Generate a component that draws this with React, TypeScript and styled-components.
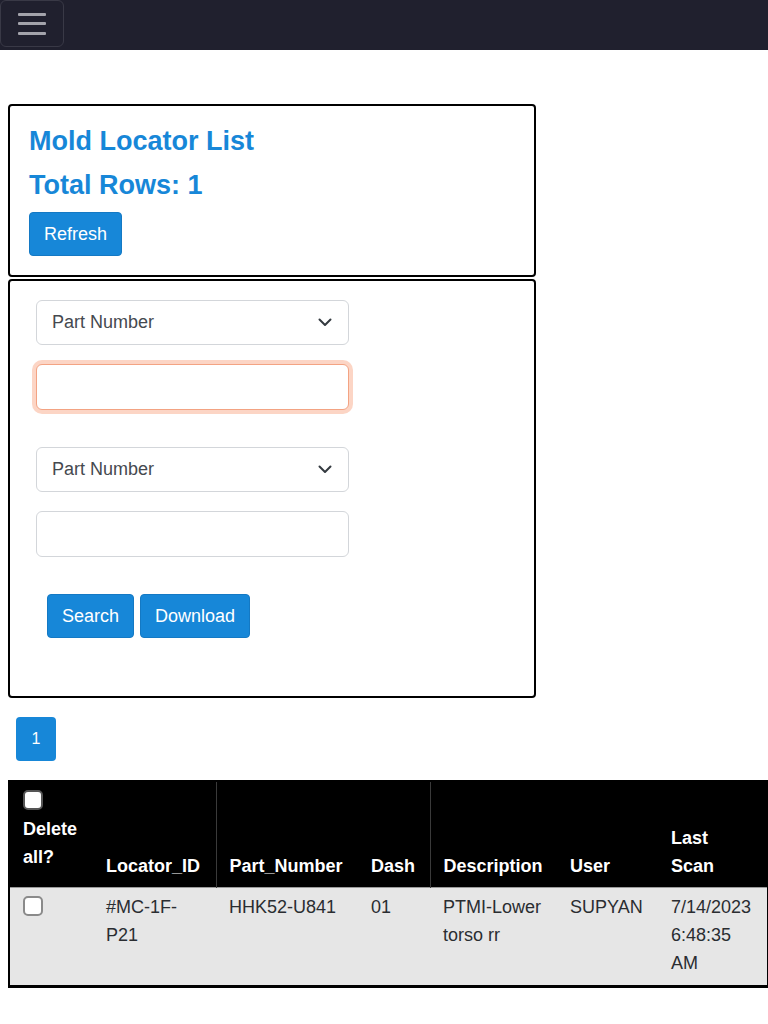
import styled, { createGlobalStyle } from 'styled-components'

const GlobalStyle = createGlobalStyle`
    body {
        margin: 0;
        background: #ffffff;
        font-family: "Liberation Sans", Arial, sans-serif;
        color: #212529;
    }
    * {
        box-sizing: border-box;
    }
`

const BLUE = '#1787d8'

const Navbar = styled.nav`
    height: 50px;
    background: #20202e;
    display: flex;
    align-items: flex-start;
`

const Toggler = styled.button`
    width: 64px;
    height: 47px;
    margin: 0;
    background: transparent;
    border: 1px solid #393946;
    border-radius: 6px;
    display: flex;
    flex-direction: column;
    align-items: center;
    justify-content: center;
    gap: 6.5px;
    padding: 0;
    > span {
        display: block;
        width: 28px;
        height: 3px;
        border-radius: 1px;
        background: #a3a3ab;
    }
`

const Main = styled.main`
    padding: 54px 8px 0;
`

const Card = styled.section<{ pad: string; height: number }>`
    width: 528px;
    height: ${({ height }) => height}px;
    border: 2px solid #000;
    border-radius: 4px;
    padding: ${({ pad }) => pad};
    margin-bottom: 2px;
`

const Title = styled.h1`
    margin: 0;
    font-size: 27px;
    line-height: 44px;
    font-weight: 700;
    color: ${BLUE};
`

const Button = styled.button<{ offset?: number }>`
    height: 44px;
    padding: 0 14px;
    margin-top: ${({ offset }) => offset ?? 0}px;
    border: 1px solid #1479c4;
    border-radius: 4px;
    background: ${BLUE};
    color: #fff;
    font-family: "Liberation Sans", Arial, sans-serif;
    font-size: 18px;
`

const Form = styled.div`
    display: flex;
    flex-direction: column;
    align-items: flex-start;
`

const Select = styled.div`
    width: 313px;
    height: 45px;
    border: 1px solid #d3d6da;
    border-radius: 6px;
    display: flex;
    align-items: center;
    justify-content: space-between;
    padding: 0 16px 0 15px;
    font-size: 18px;
    color: #45494f;
    margin-bottom: 19px;
`

const Input = styled.input<{ focused?: boolean; gapAfter: number }>`
    width: 313px;
    height: 46px;
    border: 1px solid ${({ focused }) => (focused ? '#f3a383' : '#d3d6da')};
    border-radius: 6px;
    box-shadow: ${({ focused }) => (focused ? '0 0 0 4px rgba(250, 172, 140, 0.5)' : 'none')};
    margin-bottom: ${({ gapAfter }) => gapAfter}px;
    outline: none;
`

const ButtonRow = styled.div`
    display: flex;
    gap: 6px;
    padding-left: 11px;
`

const Pager = styled.div`
    padding: 17px 0 19px 8px;
`

const PageButton = styled.button`
    width: 40px;
    height: 44px;
    border: none;
    border-radius: 4px;
    background: ${BLUE};
    color: #fff;
    font-family: "Liberation Sans", Arial, sans-serif;
    font-size: 16px;
`

const Table = styled.table`
    width: 759px;
    table-layout: fixed;
    border-collapse: collapse;
    border: 2px solid #000;
    border-bottom-width: 3px;
    font-size: 18px;
    line-height: 28px;
`

const Th = styled.th<{ divider?: boolean; first?: boolean }>`
    background: #000;
    color: #fff;
    text-align: left;
    vertical-align: bottom;
    font-weight: 700;
    padding: 6px 14px ${({ first }) => (first ? 16 : 7)}px 13px;
    border-left: ${({ divider }) => (divider ? '1px solid #3a3a3a' : 'none')};
`

const Td = styled.td`
    background: #e6e6e6;
    color: #2a2d31;
    vertical-align: top;
    padding: 5px 14px 8px 13px;
    border-top: 1px solid #9a9a9a;
`

const Check = styled.span<{ dark?: boolean }>`
    display: block;
    width: 20px;
    height: 20px;
    border-radius: 5px;
    background: #fff;
    border: 2px solid ${({ dark }) => (dark ? '#555' : '#8a8a8a')};
    margin: ${({ dark }) => (dark ? '2px 0 5px' : '3px 0 0')};
`

const Chevron = () => (
    <svg width="14" height="9" viewBox="0 0 14 9" fill="none">
        <path d="M1.5 1.5 L7 7 L12.5 1.5" stroke="#343a40" strokeWidth="2" strokeLinecap="round" strokeLinejoin="round" />
    </svg>
)

const widths = [84, 123, 142, 72, 127, 101, 110]

export default function App() {
    return (
        <>
            <GlobalStyle />
            <Navbar>
                <Toggler aria-label="menu">
                    <span />
                    <span />
                    <span />
                </Toggler>
            </Navbar>
            <Main>
                <Card pad="13px 19px" height={173}>
                    <Title>Mold Locator List</Title>
                    <Title>Total Rows: 1</Title>
                    <Button offset={5}>Refresh</Button>
                </Card>
                <Card pad="19px 26px" height={419}>
                    <Form>
                        <Select>
                            Part Number
                            <Chevron />
                        </Select>
                        <Input focused gapAfter={37} />
                        <Select>
                            Part Number
                            <Chevron />
                        </Select>
                        <Input gapAfter={37} />
                        <ButtonRow>
                            <Button>Search</Button>
                            <Button>Download</Button>
                        </ButtonRow>
                    </Form>
                </Card>
                <Pager>
                    <PageButton>1</PageButton>
                </Pager>
                <Table>
                    <colgroup>
                        {widths.map((w, i) => (
                            <col key={i} style={{ width: w }} />
                        ))}
                    </colgroup>
                    <thead>
                        <tr>
                            <Th first>
                                <Check dark />
                                Delete all?
                            </Th>
                            <Th>Locator_ID</Th>
                            <Th divider>Part_Number</Th>
                            <Th>Dash</Th>
                            <Th divider>Description</Th>
                            <Th>User</Th>
                            <Th>Last Scan</Th>
                        </tr>
                    </thead>
                    <tbody>
                        <tr>
                            <Td>
                                <Check />
                            </Td>
                            <Td>#MC-1F-P21</Td>
                            <Td>HHK52-U841</Td>
                            <Td>01</Td>
                            <Td>PTMI-Lower torso rr</Td>
                            <Td>SUPYAN</Td>
                            <Td>7/14/2023 6:48:35 AM</Td>
                        </tr>
                    </tbody>
                </Table>
            </Main>
        </>
    )
}
